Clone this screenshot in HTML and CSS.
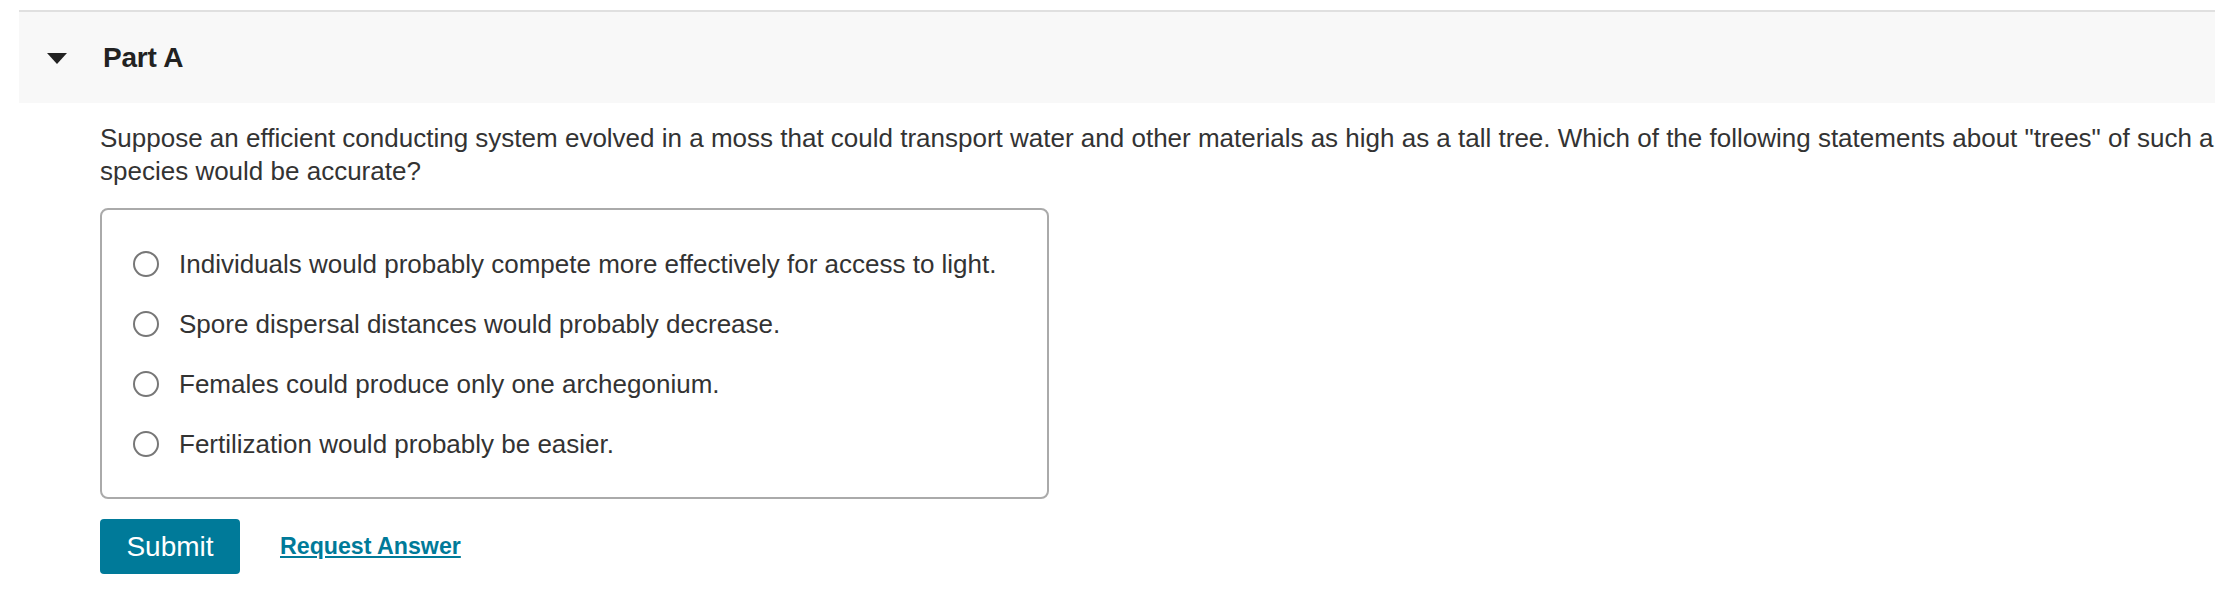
FILE: index.html
```html
<!DOCTYPE html>
<html lang="en">
<head>
    <meta charset="UTF-8">
    <meta name="viewport" content="width=device-width, initial-scale=1.0">
    <title>Part A</title>
    <link rel="stylesheet" href="styles.css">
</head>
<body>
    <div class="page">
        <header class="part-header">
            <span class="caret"></span>
            <h2>Part A</h2>
        </header>

        <section class="part-body">
            <p class="question">Suppose an efficient conducting system evolved in a moss that could transport water and other materials as high as a tall tree. Which of the following statements about "trees" of such a species would be accurate?</p>

            <form class="answer-form">
                <div class="choices">
                    <label class="choice"><input type="radio" name="answer"> Individuals would probably compete more effectively for access to light.</label>
                    <label class="choice"><input type="radio" name="answer"> Spore dispersal distances would probably decrease.</label>
                    <label class="choice"><input type="radio" name="answer"> Females could produce only one archegonium.</label>
                    <label class="choice"><input type="radio" name="answer"> Fertilization would probably be easier.</label>
                </div>

                <div class="actions">
                    <button type="submit">Submit</button>
                    <a href="#" class="request-link">Request Answer</a>
                </div>
            </form>
        </section>
    </div>
</body>
</html>
```

FILE: styles.css
```css
* {
    margin: 0;
    padding: 0;
    box-sizing: border-box;
    font-family: 'Liberation Sans', Arial, sans-serif;
}

body {
    background-color: white;
    color: #333;
}

.page {
    padding: 10px 22px 0 19px;
}

.part-header {
    display: flex;
    align-items: center;
    height: 93px;
    background-color: #f8f8f8;
    border-top: 2px solid #e0e0e0;
    padding-left: 28px;
}

.caret {
    width: 0;
    height: 0;
    border-left: 10.5px solid transparent;
    border-right: 10.5px solid transparent;
    border-top: 11px solid #222;
    margin-right: 36px;
    margin-top: 2px;
}

.part-header h2 {
    font-size: 28px;
    font-weight: bold;
    color: #222;
    letter-spacing: -0.2px;
}

.part-body {
    padding: 19px 0 0 81px;
}

.question {
    font-size: 26px;
    line-height: 33px;
    color: #333;
}

.choices {
    margin-top: 20px;
    width: 949px;
    border: 2px solid #aaa;
    border-radius: 8px;
    padding: 24px 0 23px 0;
}

.choice {
    display: flex;
    align-items: center;
    height: 60px;
    padding-left: 31px;
    font-size: 26px;
    color: #333;
    gap: 20px;
}

.choice input {
    appearance: none;
    width: 26px;
    height: 26px;
    border: 2px solid #777;
    border-radius: 50%;
    background: white;
    flex-shrink: 0;
}

.actions {
    display: flex;
    align-items: center;
    margin-top: 20px;
}

button {
    width: 140px;
    height: 55px;
    background-color: #007a99;
    color: white;
    border: none;
    border-radius: 4px;
    font-size: 28px;
    cursor: pointer;
}

.request-link {
    margin-left: 40px;
    color: #007a99;
    font-size: 23.2px;
    font-weight: bold;
    text-decoration: underline;
}
```
